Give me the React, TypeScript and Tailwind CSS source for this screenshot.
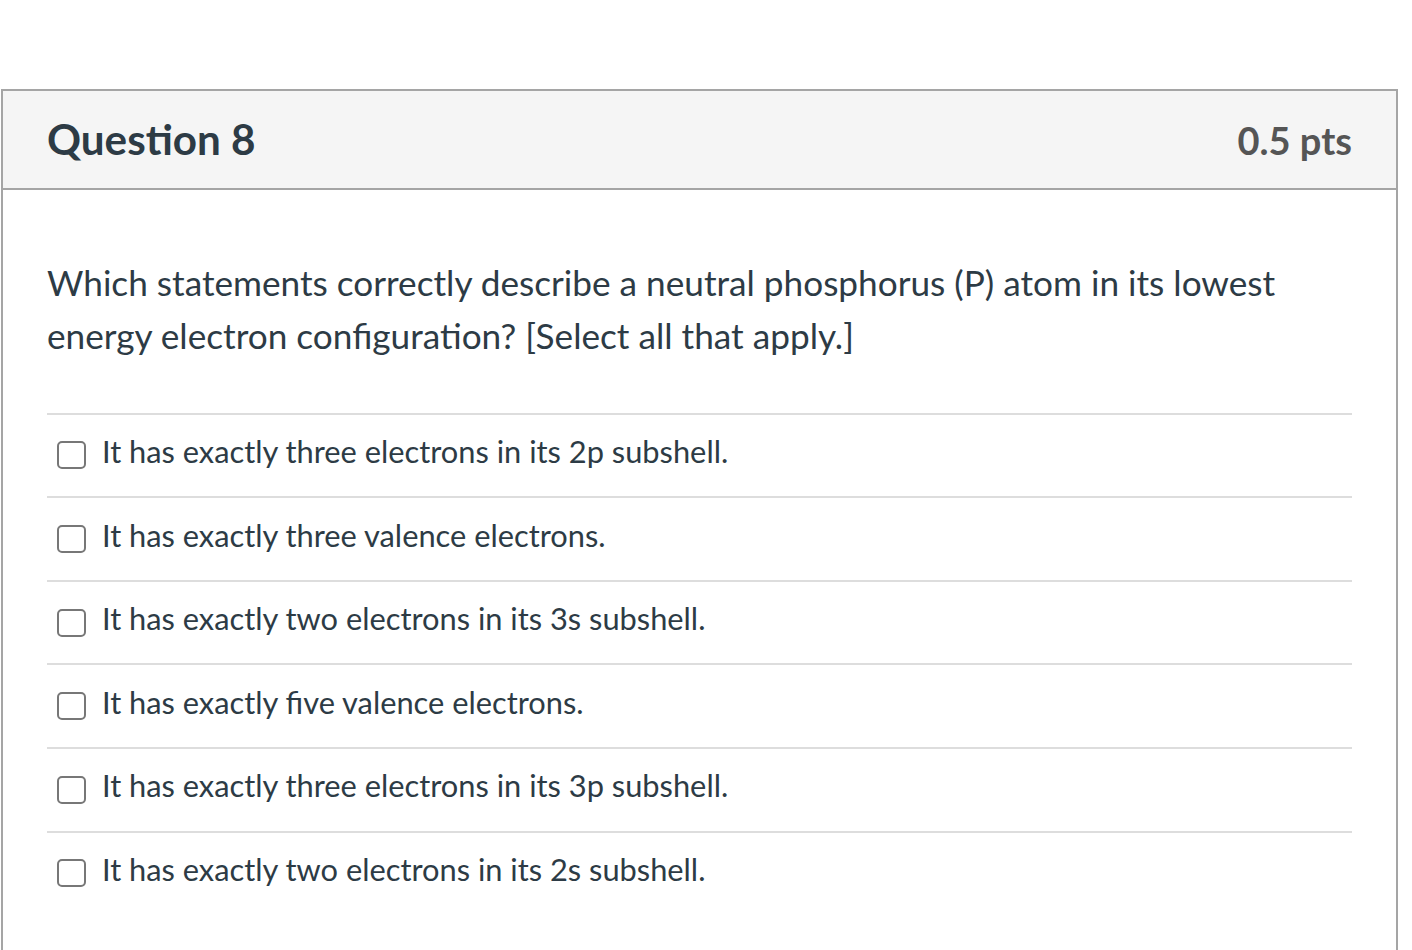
import React from "react";

const answers = [
  "It has exactly three electrons in its 2p subshell.",
  "It has exactly three valence electrons.",
  "It has exactly two electrons in its 3s subshell.",
  "It has exactly five valence electrons.",
  "It has exactly three electrons in its 3p subshell.",
  "It has exactly two electrons in its 2s subshell.",
];

export default function App() {
  return (
    <div
      className="w-[1412px] h-[950px] overflow-hidden bg-white text-[#2d3b45]"
      style={{ fontFamily: "Lato, 'Noto Sans', sans-serif" }}
    >
      <div className="h-[89px]" />
      <div className="ml-[1px] w-[1397px] border-2 border-[#a5a5a5] border-b-0 h-[900px]">
        <div className="h-[99px] bg-[#f5f5f5] border-b-2 border-[#a5a5a5] flex items-center justify-between pl-[44px] pr-[44px]">
          <div className="text-[42.2px] font-bold leading-none">Question 8</div>
          <div className="text-[38px] font-bold leading-none text-[#555555]">0.5 pts</div>
        </div>
        <div className="px-[44px] pt-[66px]">
          <div className="text-[35.2px] leading-[52.8px]">
            Which statements correctly describe a neutral phosphorus (P) atom in its lowest
            energy electron configuration? [Select all that apply.]
          </div>
          <div className="mt-[51px]">
            {answers.map((a) => (
              <div
                key={a}
                className="h-[83.6px] border-t-2 border-[#dddddd] flex items-center pl-[10px]"
              >
                <div className="w-[29px] h-[28px] border-2 border-[#777777] rounded-[5px] shrink-0" />
                <div className="ml-[16px] mb-[6px] text-[30.8px] leading-none">{a}</div>
              </div>
            ))}
          </div>
        </div>
      </div>
    </div>
  );
}
